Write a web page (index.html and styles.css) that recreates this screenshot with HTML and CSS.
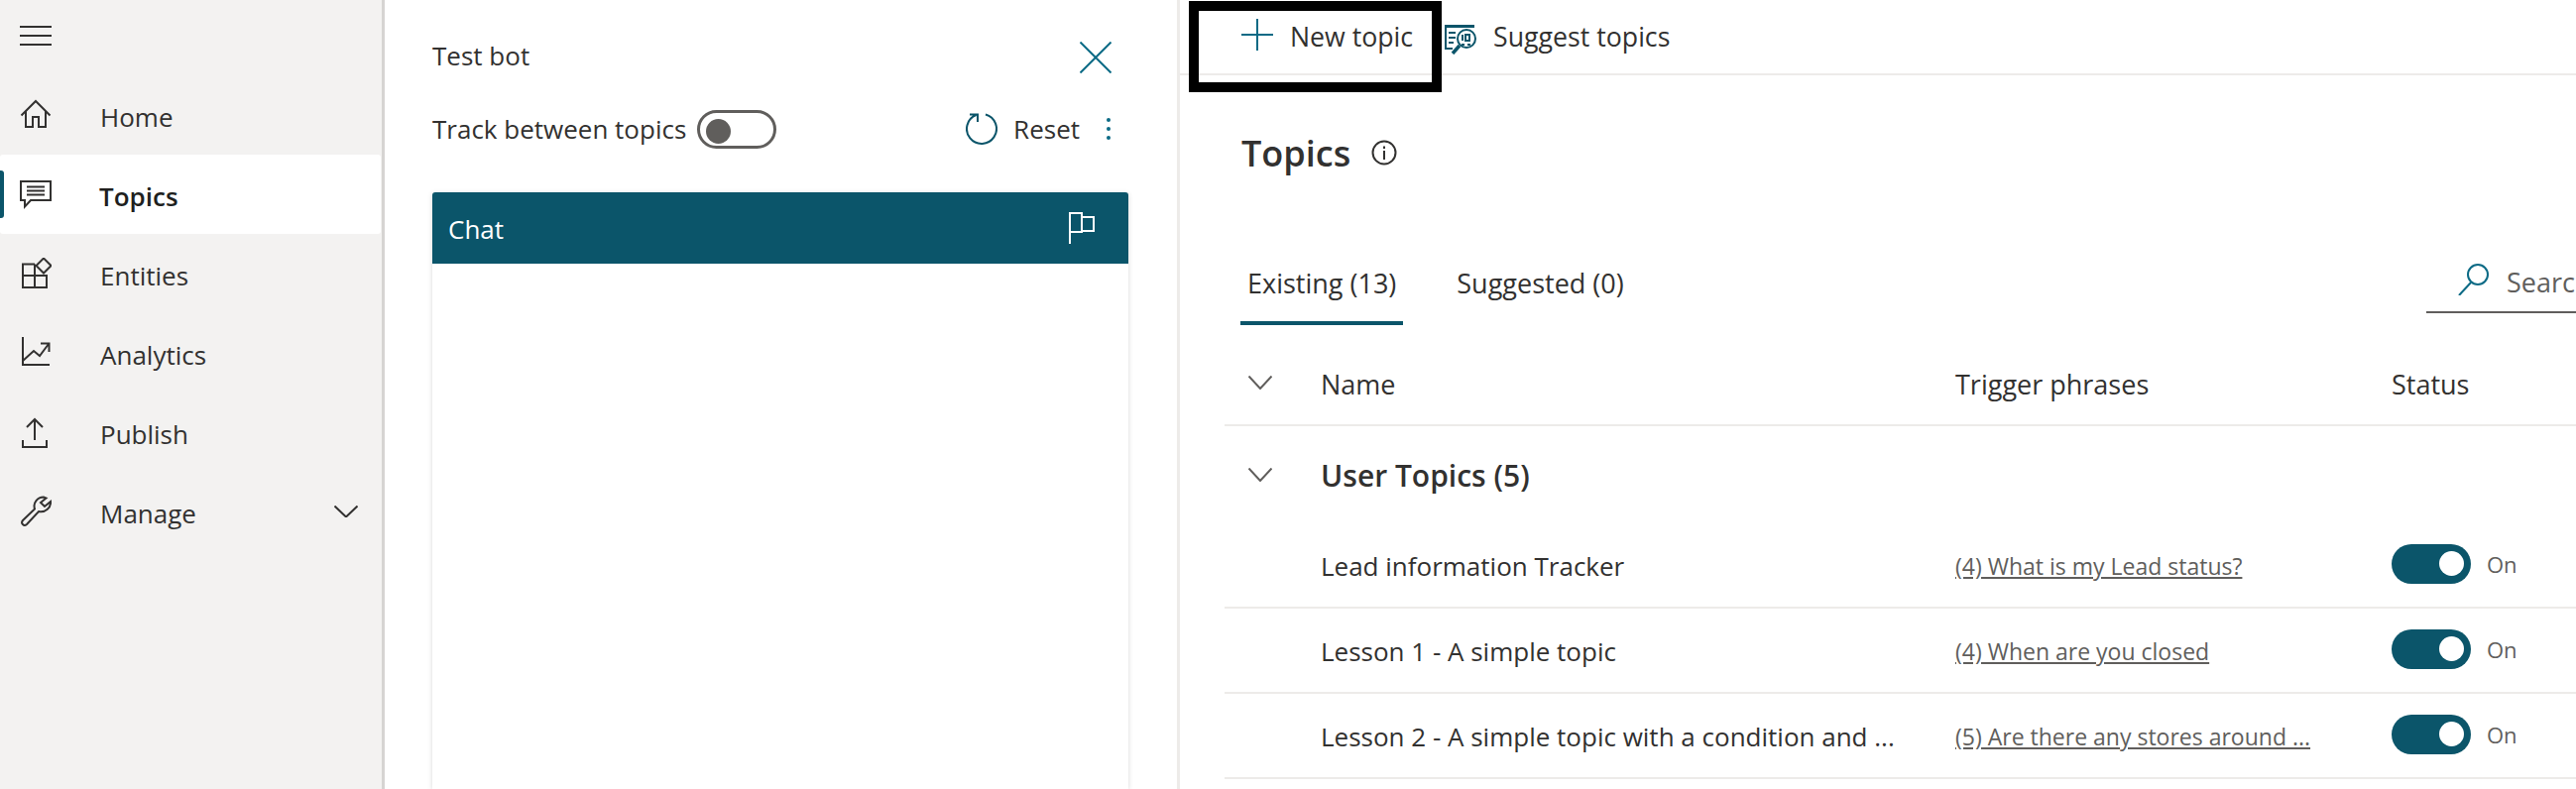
FILE: index.html
```html
<!DOCTYPE html>
<html lang="en">
<head>
<meta charset="utf-8">
<title>Topics</title>
<link rel="stylesheet" href="styles.css">
</head>
<body>
<div class="app">
  <nav class="sidebar">
    <div class="burger-row">
      <svg class="icon" viewBox="0 0 32 32"><path d="M0 5H32M0 14H32M0 23H32"/></svg>
    </div>
    <a class="nav-item"><svg class="icon" viewBox="0 0 32 32"><path d="M1.5 16.5L16 2L30.5 16.5M6 12.5V28H13V18H19V28H26V12.5"/></svg><span>Home</span></a>
    <a class="nav-item active"><svg class="icon" viewBox="0 0 32 32"><path d="M1 3H31V22H11L5 28.5V22H1ZM7 8.5H25M7 12.5H25M7 16.5H25"/></svg><span>Topics</span></a>
    <a class="nav-item"><svg class="icon" viewBox="0 0 32 32"><path d="M15 6.5H3V30H27V17M3 18H27M15 6.5V30M24 0.5L31.5 8L24 15.5L16.5 8Z"/></svg><span>Entities</span></a>
    <a class="nav-item"><svg class="icon" viewBox="0 0 32 32"><path d="M3 0V28H30M3 24L14 14L20 19L29 7M21 6.5H29.5V15"/></svg><span>Analytics</span></a>
    <a class="nav-item"><svg class="icon" viewBox="0 0 32 32"><path d="M15 3V24M7 11L15 3L23 11M3 24V31H27V24"/></svg><span>Publish</span></a>
    <a class="nav-item"><svg class="icon" viewBox="0 0 32 32"><path d="M3 25L15 13.5C13 7 18 1.5 24 1.5L26.5 2.5L21 7L25 11L31 6C31.5 12 26 17.5 19 16L7 29C4 31.5 0.5 28 3 25Z"/></svg><span>Manage</span><svg class="chev" viewBox="0 0 24 12"><path d="M0.5 0.5L12 11.5L23.5 0.5"/></svg></a>
  </nav>

  <section class="test-panel">
    <header class="test-head">
      <span>Test bot</span>
      <svg class="icon teal close" viewBox="0 0 32 32"><path d="M0.5 0.5L31.5 31.5M31.5 0.5L0.5 31.5"/></svg>
    </header>
    <div class="test-tools">
      <span>Track between topics</span>
      <span class="toggle-off"><i></i></span>
      <svg class="icon reset" viewBox="0 0 32 32"><path d="M20 1.5A15 15 0 1 1 10.5 2M4 1.5H12V9"/></svg>
      <span class="reset-label">Reset</span>
      <span class="dots"><i></i><i></i><i></i></span>
    </div>
    <div class="chat">
      <div class="chat-head">
        <span>Chat</span>
        <svg class="flag" viewBox="0 0 26 32"><path d="M1 32V1H13V20H1M13 5H25V19H13"/></svg>
      </div>
    </div>
  </section>

  <main class="main">
    <div class="toolbar">
      <svg class="icon teal plus" viewBox="0 0 32 32"><path d="M16 0V32M0 16H32"/></svg>
      <span class="new-label">New topic</span>
      <svg class="suggest" viewBox="0 0 32 30"><path class="solid" d="M0 0H30V3H0Z"/><path d="M1 3V24H8M4 8H11M4 13H11M4 18H9"/><circle cx="22" cy="14" r="9"/><path class="handle" d="M15 21L8 29"/><path d="M18 10V16M21 10H25V16H21ZM17 20H20M23 20H26"/></svg>
      <span class="suggest-label">Suggest topics</span>
      <span class="annotation"></span>
    </div>
    <div class="content">
      <div class="title-row">
        <h1>Topics</h1>
        <svg class="info" viewBox="0 0 26 26"><circle cx="13" cy="13" r="11.5"/><path d="M13 11V20M13 6.5V9"/></svg>
      </div>
      <div class="tabs">
        <span class="tab current">Existing (13)</span>
        <span class="tab">Suggested (0)</span>
        <div class="search">
          <svg class="icon teal" viewBox="0 0 32 32"><circle cx="20" cy="11" r="10"/><path d="M13 19L1 32"/></svg>
          <span>Search</span>
        </div>
      </div>
      <div class="grid head">
        <svg class="chev-small" viewBox="0 0 24 14"><path d="M0.5 0.5L12 13L23.5 0.5"/></svg>
        <b>Name</b><b>Trigger phrases</b><b>Status</b>
      </div>
      <div class="grid group">
        <svg class="chev-small" viewBox="0 0 24 14"><path d="M0.5 0.5L12 13L23.5 0.5"/></svg>
        <b>User Topics (5)</b>
      </div>
      <div class="grid row">
        <span></span><span class="name">Lead information Tracker</span>
        <a class="phrase">(4) What is my Lead status?</a>
        <span class="status"><span class="toggle-on"><i></i></span><span>On</span></span>
      </div>
      <div class="grid row">
        <span></span><span class="name">Lesson 1 - A simple topic</span>
        <a class="phrase">(4) When are you closed</a>
        <span class="status"><span class="toggle-on"><i></i></span><span>On</span></span>
      </div>
      <div class="grid row">
        <span></span><span class="name">Lesson 2 - A simple topic with a condition and ...</span>
        <a class="phrase">(5) Are there any stores around ...</a>
        <span class="status"><span class="toggle-on"><i></i></span><span>On</span></span>
      </div>
    </div>
  </main>
</div>
</body>
</html>
```
FILE: styles.css
```css
* { box-sizing: border-box; }
html, body { margin: 0; height: 796px; overflow: hidden; background: #fff; }
body { font-family: "Open Sans", "Noto Sans", sans-serif; font-size: 26px; color: #323130; }
.app { display: flex; height: 796px; overflow: hidden; }
svg { display: block; flex: none; fill: none; }
svg path, svg circle { stroke: currentColor; stroke-width: 2; }
.icon { width: 32px; height: 32px; color: #323130; }
.teal { color: #0b6a85; }

.sidebar { width: 388px; flex: none; background: #f3f2f1; border-right: 3px solid #d6d4d2; }
.burger-row { height: 76px; padding: 22px 0 0 20px; }
.nav-item { position: relative; display: flex; align-items: center; height: 80px; padding-left: 20px; margin-right: 1px; }
.nav-item > span { margin: 3px 0 0 49px; }
.nav-item.active { background: #fff; font-weight: 600; color: #201f1e; border-radius: 3px; }
.nav-item.active > span { margin-left: 48px; }
.nav-item.active::before { content: ""; position: absolute; left: 0; top: 16px; width: 4px; height: 48px; background: #0b556a; border-radius: 0 3px 3px 0; }
.chev { width: 24px; height: 12px; margin-left: auto; margin-right: 23px; color: #323130; }

.test-panel { width: 800px; flex: none; padding: 0 50px 0 48px; display: flex; flex-direction: column; }
.test-head { height: 112px; display: flex; align-items: center; justify-content: space-between; padding-right: 17px; }
.close { margin-top: 4px; }
.test-tools { height: 36px; margin-bottom: 46px; display: flex; align-items: center; }
.toggle-off { width: 80px; height: 39px; margin-left: 11px; border: 3px solid #605e5c; border-radius: 20px; padding: 6px 0 0 6px; }
.toggle-off i { display: block; width: 25px; height: 25px; border-radius: 50%; background: #605e5c; }
.reset { margin-left: auto; color: #0b556a; }
.reset-label { margin-left: 16px; }
.dots { display: flex; flex-direction: column; gap: 5px; margin: 0 18px 0 27px; }
.dots i { width: 4px; height: 4px; border-radius: 50%; background: #0b6a85; }
.chat { flex: 1; box-shadow: 0 1px 5px rgba(0,0,0,.16); border-radius: 3px 3px 0 0; }
.chat-head { height: 72px; background: #0b556a; color: #fff; display: flex; align-items: center; justify-content: space-between; padding: 2px 34px 0 16px; border-radius: 3px 3px 0 0; }
.flag { width: 26px; height: 32px; color: #fff; margin-top: -2px; }

.main { flex: 1; min-width: 0; border-left: 3px solid #edebe9; overflow: hidden; margin-left: -1px; }
.toolbar { position: relative; height: 76px; border-bottom: 2px solid #edebe9; display: flex; align-items: flex-start; padding: 19px 0 0 62px; }
.toolbar > span { line-height: 32px; font-size: 26.7px; margin-top: 2px; }
.new-label { margin-left: 17px; }
.suggest { width: 32px; height: 30px; margin: 6px 17px 0 32px; color: #0b556a; }
.suggest .solid { fill: currentColor; stroke: none; }
.suggest .handle { stroke-width: 3.5; }
.toolbar .annotation { position: absolute; left: 9px; top: 1px; width: 255px; height: 92px; border: 10px solid #000; margin: 0; }

.content { padding-left: 45px; width: 1500px; }
.title-row { height: 174px; display: flex; align-items: flex-start; padding: 55px 0 0 17px; }
h1 { margin: 0; font-size: 36px; line-height: 48px; font-weight: 600; }
.info { width: 26px; height: 26px; margin: 10px 0 0 21px; }
.tabs { display: flex; height: 78px; padding-left: 16px; font-size: 27px; }
.tab { padding: 17px 7px 0; }
.tab.current { border-bottom: 4px solid #0b556a; font-weight: 500; margin-right: 47px; }
.search { margin-left: auto; margin-right: 23px; width: 220px; height: 66px; border-bottom: 2px solid #605e5c; display: flex; align-items: flex-start; padding: 16px 0 0 32px; color: #605e5c; }
.search span { margin-left: 17px; }
.grid { display: grid; grid-template-columns: 97px 640px 440px 1fr; align-items: center; border-bottom: 2px solid #edebe9; }
.grid b { font-weight: 500; font-size: 27px; margin-top: 2px; }
.chev-small { width: 24px; height: 14px; margin-left: 24px; color: #605e5c; }
.head { height: 102px; padding-top: 16px; }
.group { height: 98px; border-bottom: 0; }
.group b { font-size: 30px; font-weight: 600; margin-top: 0; }
.row { height: 86px; }
.name { margin-top: 2px; }
.phrase { font-size: 23px; color: #605e5c; text-decoration: underline; margin-top: 2px; }
.status { display: flex; align-items: center; font-size: 22px; color: #605e5c; margin-top: -2px; }
.toggle-on { display: block; width: 80px; height: 40px; border-radius: 20px; background: #0b556a; margin-right: 16px; padding: 7px 0 0 48px; }
.toggle-on i { display: block; width: 25px; height: 25px; border-radius: 50%; background: #fff; }
```
